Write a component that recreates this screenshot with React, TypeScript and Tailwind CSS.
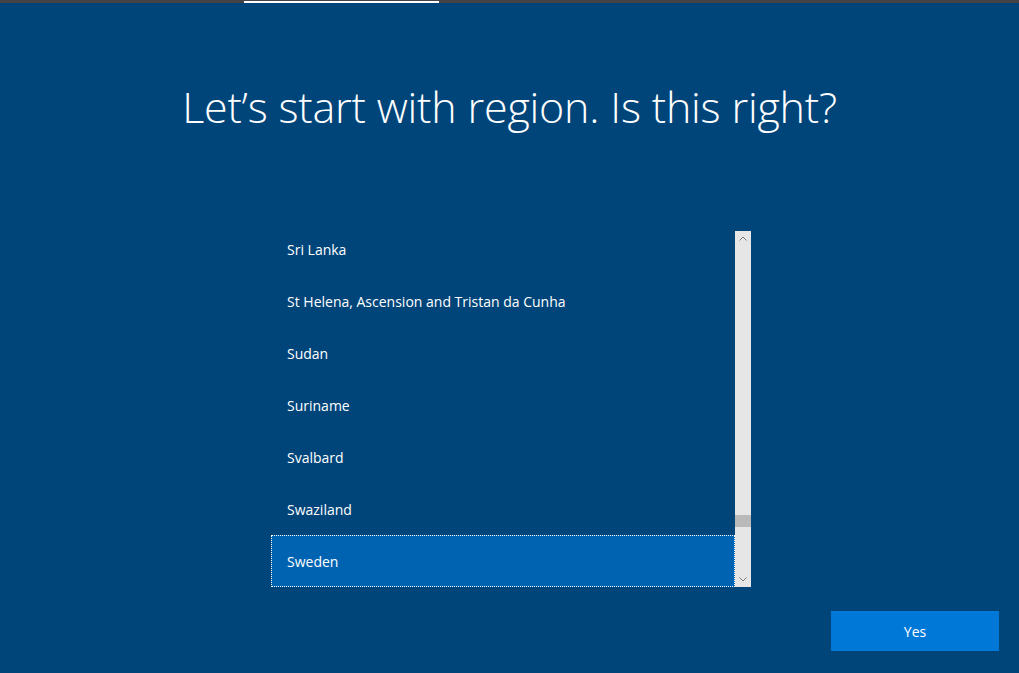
import React from "react";

const items = [
  "Sri Lanka",
  "St Helena, Ascension and Tristan da Cunha",
  "Sudan",
  "Suriname",
  "Svalbard",
  "Swaziland",
  "Sweden",
];

export default function App() {
  return (
    <div
      className="w-[1019px] h-[673px] bg-[#00457a] flex flex-col overflow-hidden text-white"
      style={{ fontFamily: '"Open Sans", "Noto Sans", sans-serif' }}
    >
      <div className="h-[3px] bg-[#444444] flex shrink-0">
        <div className="w-[244px]" />
        <div className="w-[195px] mt-[1px] h-[2px] bg-white" />
      </div>
      <h1 className="mt-[80px] text-center text-[43px] leading-[48px] font-light tracking-[-0.2px]">
        Let’s start with region. Is this right?
      </h1>
      <div className="mt-[100px] ml-[271px] w-[480px] h-[356px] flex">
        <div className="flex-1 overflow-hidden">
          <div className="-mt-[8px] flex flex-col">
            {items.map((it) => (
              <div
                key={it}
                className={`h-[52px] shrink-0 flex items-center text-[14px] ${
                  it === "Sweden"
                    ? "bg-[#0063b1] border border-dotted border-white pl-[15px]"
                    : "pl-[16px]"
                }`}
              >
                {it}
              </div>
            ))}
          </div>
        </div>
        <div className="w-[16px] bg-[#e6e6e6] flex flex-col items-center">
          <svg width="16" height="16" viewBox="0 0 16 16" className="shrink-0">
            <path d="M4.5 9.5 L8 6 L11.5 9.5" stroke="#7a7a7a" strokeWidth="1" fill="none" />
          </svg>
          <div className="flex-1 w-full flex flex-col">
            <div className="h-[268px]" />
            <div className="h-[12px] bg-[#b9b9b9] w-full" />
          </div>
          <svg width="16" height="16" viewBox="0 0 16 16" className="shrink-0">
            <path d="M4.5 6.5 L8 10 L11.5 6.5" stroke="#7a7a7a" strokeWidth="1" fill="none" />
          </svg>
        </div>
      </div>
      <div className="mt-[24px] flex justify-end pr-[20px]">
        <button className="w-[168px] h-[40px] bg-[#0078d7] text-[14px] text-white">
          Yes
        </button>
      </div>
    </div>
  );
}
